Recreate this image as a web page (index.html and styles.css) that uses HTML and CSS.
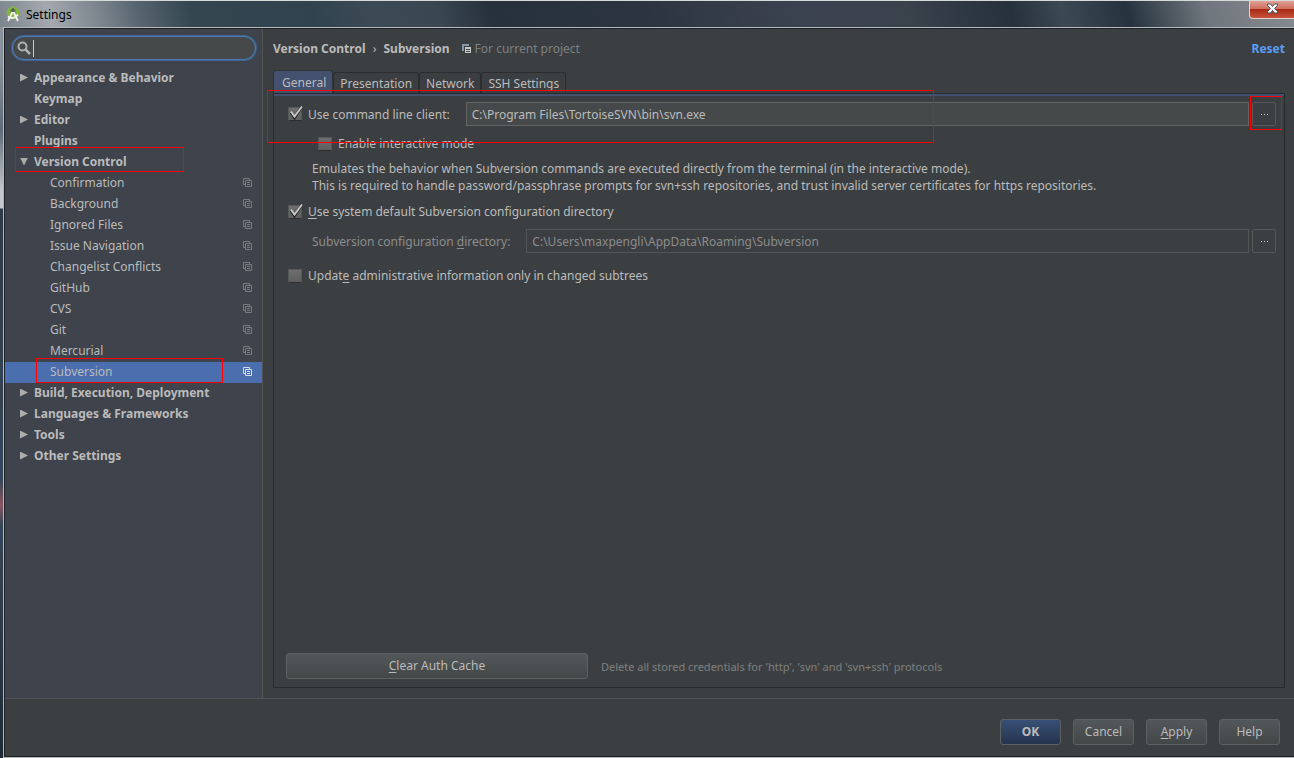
FILE: index.html
```html
<!DOCTYPE html>
<html lang="en">
<head>
    <meta charset="UTF-8">
    <meta name="viewport" content="width=device-width, initial-scale=1.0">
    <title>Settings</title>
    <link rel="stylesheet" href="styles.css">
</head>
<body>
    <svg class="defs" width="0" height="0" aria-hidden="true">
        <symbol id="copy" viewBox="0 0 9 9">
            <path d="M2 6.5H.5v-6h6V2M2.5 2.5h6v6h-6zM4 4.5h3M4 6.5h3" fill="none" stroke="currentColor"/>
        </symbol>
        <symbol id="tick" viewBox="0 0 16 16">
            <path d="M3 7.5l3.5 5L14 1.5" fill="none" stroke="#222" stroke-width="3"/>
            <path d="M3 6.5l3.5 5L14 1.5" fill="none" stroke="#c8c8c8" stroke-width="2"/>
        </symbol>
    </svg>

    <header class="titlebar">
        <svg class="logo" width="16" height="16" viewBox="0 0 16 16">
            <circle cx="7" cy="7" r="6.5" fill="#82b440"/>
            <circle cx="7" cy="5" r="2.5" fill="#5c6d50"/>
            <path d="M6.5 6L2 15M7.5 6l4.5 9M2 10.5c3 2.5 7 2 10-2" fill="none" stroke="#f4f4f4" stroke-width="1.8"/>
            <path d="M7 2v4" stroke="#4c5b45"/>
        </svg>
        <h1>Settings</h1>
        <button class="close" aria-label="Close">
            <svg width="13" height="11" viewBox="0 0 13 11">
                <path d="M1.5 1h3l2 2.5L8.5 1h3v1.500L8.500 5.500l3 3V10h-3l-2-2.500L4.500 10h-3V8.500l3-3-3-3z" fill="#fff" stroke="#4a5060"/>
            </svg>
        </button>
    </header>

    <div class="window">
        <div class="columns">
            <nav class="sidebar">
                <div class="search">
                    <svg width="14" height="14" viewBox="0 0 14 14" fill="none" stroke="#b0b0b0"><circle cx="5.5" cy="5.5" r="4" stroke-width="2"/><path d="M8.5 8.5l4.5 4.5" stroke-width="2.5"/></svg>
                    <span class="caret"></span>
                    <input type="text" aria-label="Search settings">
                </div>
                <ul class="tree">
                    <li><a class="group closed" href="#">Appearance &amp; Behavior</a></li>
                    <li><a class="group" href="#">Keymap</a></li>
                    <li><a class="group closed" href="#">Editor</a></li>
                    <li><a class="group" href="#">Plugins</a></li>
                    <li><a class="group open" href="#">Version Control</a><span class="mark mark-group"></span></li>
                    <li><a class="item" href="#">Confirmation<svg><use href="#copy"/></svg></a></li>
                    <li><a class="item" href="#">Background<svg><use href="#copy"/></svg></a></li>
                    <li><a class="item" href="#">Ignored Files<svg><use href="#copy"/></svg></a></li>
                    <li><a class="item" href="#">Issue Navigation<svg><use href="#copy"/></svg></a></li>
                    <li><a class="item" href="#">Changelist Conflicts<svg><use href="#copy"/></svg></a></li>
                    <li><a class="item" href="#">GitHub<svg><use href="#copy"/></svg></a></li>
                    <li><a class="item" href="#">CVS<svg><use href="#copy"/></svg></a></li>
                    <li><a class="item" href="#">Git<svg><use href="#copy"/></svg></a></li>
                    <li><a class="item" href="#">Mercurial<svg><use href="#copy"/></svg></a></li>
                    <li><a class="item selected" href="#">Subversion<svg><use href="#copy"/></svg></a><span class="mark mark-item"></span></li>
                    <li><a class="group closed" href="#">Build, Execution, Deployment</a></li>
                    <li><a class="group closed" href="#">Languages &amp; Frameworks</a></li>
                    <li><a class="group closed" href="#">Tools</a></li>
                    <li><a class="group closed" href="#">Other Settings</a></li>
                </ul>
            </nav>

            <main class="content">
                <div class="heading">
                    <h2>Version Control <span class="sep">›</span> Subversion</h2>
                    <svg class="scope-icon" viewBox="0 0 9 9">
                        <path d="M0 0h7v2H2v5H0z" fill="#8796a5"/>
                        <path d="M3 3h6v6H3z" fill="#c3c7ca"/>
                        <path d="M4 5.5h4M4 7.5h4" stroke="#4c4f52"/>
                    </svg>
                    <span class="scope">For current project</span>
                    <a class="reset" href="#">Reset</a>
                </div>

                <div class="tabs">
                    <button class="tab active">General</button>
                    <button class="tab">Presentation</button>
                    <button class="tab">Network</button>
                    <button class="tab">SSH Settings</button>
                </div>

                <section class="panel">
                    <span class="mark mark-client"></span>
                    <div class="row">
                        <span class="check"><input type="checkbox" id="use-client" checked><svg><use href="#tick"/></svg></span>
                        <label class="client-label" for="use-client">Use command line client:</label>
                        <input class="field" type="text" aria-label="Command line client" value="C:\Program Files\TortoiseSVN\bin\svn.exe">
                        <button class="browse" aria-label="Browse for client"><i></i><i></i><i></i></button>
                        <span class="mark mark-browse"></span>
                    </div>
                    <div class="row interactive">
                        <span class="check"><input type="checkbox" id="interactive"></span>
                        <label for="interactive">Enable interactive mode</label>
                    </div>
                    <p class="note">Emulates the behavior when Subversion commands are executed directly from the terminal (in the interactive mode).<br>
                    This is required to handle password/passphrase prompts for svn+ssh repositories, and trust invalid server certificates for https repositories.</p>
                    <div class="row default-dir">
                        <span class="check"><input type="checkbox" id="default-dir" checked><svg><use href="#tick"/></svg></span>
                        <label for="default-dir"><u>U</u>se system default Subversion configuration directory</label>
                    </div>
                    <div class="row config-dir">
                        <label for="config-dir">Subversion configuration <u>d</u>irectory:</label>
                        <input class="field" type="text" id="config-dir" value="C:\Users\maxpengli\AppData\Roaming\Subversion" disabled>
                        <button class="browse" aria-label="Browse for directory"><i></i><i></i><i></i></button>
                    </div>
                    <div class="row update">
                        <span class="check"><input type="checkbox" id="update"></span>
                        <label for="update">Updat<u>e</u> administrative information only in changed subtrees</label>
                    </div>
                    <div class="auth">
                        <button class="btn"><u>C</u>lear Auth Cache</button>
                        <span>Delete all stored credentials for 'http', 'svn' and 'svn+ssh' protocols</span>
                    </div>
                </section>
            </main>
        </div>

        <footer class="actions">
            <button class="btn primary">OK</button>
            <button class="btn">Cancel</button>
            <button class="btn"><u>A</u>pply</button>
            <button class="btn">Help</button>
        </footer>
    </div>
</body>
</html>
```

FILE: styles.css
```css
* {
    box-sizing: border-box;
}

body {
    margin: 0;
    height: 100vh;
    display: flex;
    flex-direction: column;
    font-family: "Noto Sans", "Open Sans", sans-serif;
    font-size: 12px;
    line-height: 17px;
    color: #bbb;
    background: linear-gradient(#8a939b 0, #8a939b 60px, #5d6c7a 130px, #c4c7ca 190px, #c4c7ca 208px, #2c3b4b 209px, #34475a 480px, #8a5560 505px, #34475a 525px, #1f2a35);
    overflow: hidden;
}

button,
input {
    font: inherit;
    color: inherit;
    margin: 0;
}

a {
    color: inherit;
    text-decoration: none;
}

u {
    text-underline-offset: 2px;
}

.defs {
    position: absolute;
}

/* Title bar */
.titlebar {
    flex: none;
    display: flex;
    align-items: center;
    gap: 4px;
    height: 27px;
    padding-left: 6px;
    border-top: 1px solid #d5dadb;
    background: linear-gradient(75deg, #7b848c 0, #a3a9ae 4%, #7b848c 8%, #56646f 11%, #34464f 15%, #30434f 24%, #3c4a55 29%, #3a4650 34%, #26313b 38%, #2c353f 50%, #3c4350 62%, #3a424c 70%, #26313b 78%, #3c4852 82%, #26333e 87%, #6f767d 93%, #868b90);
}

.titlebar h1 {
    flex: 1;
    margin: 0;
    font-size: 12px;
    font-weight: normal;
    color: #000;
}

.close {
    align-self: flex-start;
    width: 45px;
    height: 18px;
    padding: 0;
    border: 1px solid #e8d0cc;
    border-top: 0;
    border-right: 0;
    border-radius: 0 0 0 4px;
    background: linear-gradient(#dfa195, #cd7060 45%, #a92a16 50%, #c9533c);
}

/* Window body */
.window {
    flex: 1;
    min-height: 0;
    display: flex;
    flex-direction: column;
    margin-left: 3px;
    border: 1px solid #b4b9bd;
    border-right: 0;
    background: #3c3f41;
    box-shadow: inset 1px 1px #1e2226, inset 0 -1px #1e2226;
    padding: 1px 0 1px 1px;
}

.columns {
    flex: 1;
    min-height: 0;
    display: flex;
}

.sidebar {
    flex: none;
    width: 258px;
    padding-top: 7px;
    background: #3e434c;
    border-right: 1px solid #515355;
}

.search {
    display: flex;
    align-items: center;
    height: 24px;
    margin: 0 6px 8px 7px;
    padding: 0 4px;
    border: 1px solid #4a7db8;
    border-radius: 12px;
    box-shadow: 0 0 0 1px #41658f;
    background: #45494a;
}

.search svg {
    flex: none;
}

.search input {
    flex: 1;
    min-width: 0;
    border: 0;
    outline: 0;
    background: none;
}

.caret {
    width: 1px;
    height: 17px;
    margin-left: 2px;
    background: #ccc;
}

.tree {
    list-style: none;
    margin: 0;
    padding: 0;
}

.tree li {
    position: relative;
}

.tree a {
    display: flex;
    align-items: center;
    height: 21px;
    padding-bottom: 2px;
}

.group {
    padding-left: 15px;
    font-weight: bold;
}

.group::before {
    content: "";
    width: 8px;
    height: 8px;
    margin-right: 6px;
}

.group.closed::before {
    background: #adadad;
    clip-path: polygon(0 0, 100% 50%, 0 100%);
}

.group.open::before {
    background: #adadad;
    clip-path: polygon(0 0, 100% 0, 50% 100%);
}

.item {
    padding: 0 10px 0 45px;
    justify-content: space-between;
}

.item svg,
.scope-icon {
    width: 9px;
    height: 9px;
    color: #777b80;
}

.item.selected {
    background: #4b6eaf;
}

.item.selected svg {
    color: #d5dcec;
}

/* Red outlines drawn over the controls */
.mark {
    position: absolute;
    z-index: 1;
    border: 1px solid #f00;
    pointer-events: none;
}

.mark-group {
    left: 10px;
    top: -5px;
    width: 169px;
    height: 25px;
}

.mark-item {
    left: 31px;
    top: -4px;
    width: 187px;
    height: 25px;
}

.mark-client {
    left: -7px;
    top: -4px;
    width: 667px;
    height: 53px;
}

.mark-browse {
    right: -6px;
    top: -6px;
    width: 32px;
    height: 34px;
}

/* Content */
.content {
    flex: 1;
    min-width: 0;
    display: flex;
    flex-direction: column;
    padding: 11px 9px 10px 10px;
}

.heading {
    display: flex;
    align-items: center;
    height: 17px;
    margin-bottom: 13px;
}

.heading h2 {
    margin: 0;
    font-size: 12px;
}

.sep {
    margin: 0 4px;
    font-weight: normal;
}

.scope-icon {
    margin: 0 4px 0 12px;
}

.scope {
    color: #7d7f80;
}

.reset {
    margin-left: auto;
    font-weight: bold;
    color: #589df6;
}

.tabs {
    display: flex;
    align-items: flex-end;
    height: 23px;
}

.tab {
    height: 21px;
    padding: 0 6px;
    border: 1px solid #2b2d2e;
    border-bottom: 0;
    border-radius: 3px 3px 0 0;
    background: none;
}

.tab.active {
    height: 23px;
    padding: 0 6px 0 8px;
    border-color: #2f3336;
    background: #43506e;
}

.panel {
    position: relative;
    flex: 1;
    display: flex;
    flex-direction: column;
    padding: 8px 8px 8px 12px;
    border: 1px solid #282b2d;
    box-shadow: inset 0 2px #43506e;
}

.row {
    position: relative;
    display: flex;
    align-items: center;
}

.check {
    position: relative;
    display: flex;
    margin: 0 6px 0 2px;
}

.check input {
    appearance: none;
    width: 14px;
    height: 14px;
    border: 1px solid #555859;
    border-bottom-color: #2b2d2e;
    background: linear-gradient(#6e6e6e, #5e5e5e);
}

.check svg {
    position: absolute;
    left: 0;
    top: -2px;
    width: 16px;
    height: 16px;
    pointer-events: none;
}

.client-label {
    margin-right: 16px;
}

.field {
    flex: 1;
    min-width: 0;
    height: 24px;
    padding: 0 5px;
    border: 1px solid #646464;
    background: #45494a;
}

.field:disabled {
    color: #8c8c8c;
    border-color: #555;
    background: none;
}

.browse {
    display: flex;
    align-items: center;
    justify-content: center;
    gap: 2px;
    width: 24px;
    height: 24px;
    margin-left: 3px;
    padding: 0;
    border: 1px solid #555859;
    border-radius: 2px;
    background: none;
}

.browse i {
    width: 1px;
    height: 1px;
    background: #ccc;
}

.interactive {
    margin: 9px 0 8px 30px;
}

.note {
    margin: 0 0 0 26px;
}

.default-dir {
    margin: 9px 0;
}

.config-dir {
    margin-left: 26px;
    color: #8c8c8c;
}

.config-dir label {
    margin-right: 16px;
}

.update {
    margin-top: 14px;
}

.auth {
    display: flex;
    align-items: center;
    gap: 13px;
    margin-top: auto;
    color: #7d7f80;
    font-size: 11px;
}

.btn {
    width: 61px;
    height: 26px;
    padding: 0 0 2px;
    border: 1px solid #5e6162;
    border-radius: 3px;
    background: linear-gradient(#525759, #434748);
    color: #bbb;
    font-size: 12px;
}

.auth .btn {
    width: 302px;
}

.btn.primary {
    background: linear-gradient(#375074, #25344f);
    font-weight: bold;
}

.actions {
    flex: none;
    display: flex;
    justify-content: flex-end;
    gap: 12px;
    height: 58px;
    padding: 20px 14px 0 0;
    border-top: 1px solid #515355;
}
```
